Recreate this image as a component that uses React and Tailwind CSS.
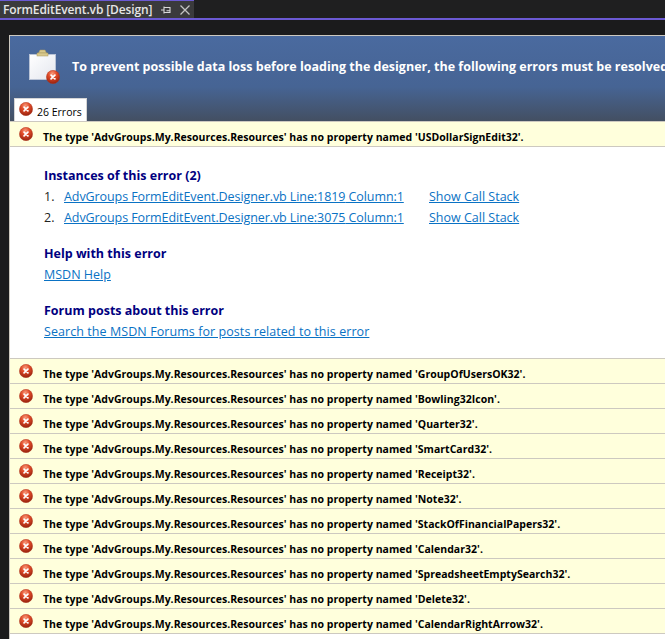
import React from 'react';

const ErrorIcon = ({ className }) => (
    <svg viewBox="0 0 16 16" className={className}>
        <defs>
            <radialGradient id="errFill" cx="45%" cy="25%" r="80%">
                <stop offset="0%" stopColor="#f79a7c" />
                <stop offset="40%" stopColor="#e04a28" />
                <stop offset="100%" stopColor="#8f1d0c" />
            </radialGradient>
        </defs>
        <circle cx="8" cy="8" r="7.6" fill="url(#errFill)" stroke="#b03a20" strokeWidth="0.5" />
        <path d="M5.8 5.8 L10.2 10.2 M10.2 5.8 L5.8 10.2" stroke="#fff" strokeWidth="2" strokeLinecap="round" />
    </svg>
);

const ClipboardIcon = () => (
    <div className="relative w-[32px] h-[36px] shrink-0">
        <svg viewBox="0 0 32 36" className="w-[32px] h-[36px]">
            <defs>
                <linearGradient id="paper" x1="0" y1="0" x2="1" y2="1">
                    <stop offset="0%" stopColor="#ffffff" />
                    <stop offset="100%" stopColor="#e3e6ee" />
                </linearGradient>
            </defs>
            <rect x="0.5" y="6.5" width="26" height="25" fill="url(#paper)" stroke="#b9c3d6" />
            <path d="M9.5 5 L11 2 H16 L17.5 5 Z" fill="#d9c98c" stroke="#a8975c" strokeWidth="0.5" />
            <rect x="8" y="5" width="11" height="3" fill="#d9c98c" stroke="#a8975c" strokeWidth="0.5" />
        </svg>
        <ErrorIcon className="absolute left-[17px] top-[22px] w-[14px] h-[14px]" />
    </div>
);

const errors = [
    'GroupOfUsersOK32',
    'Bowling32Icon',
    'Quarter32',
    'SmartCard32',
    'Receipt32',
    'Note32',
    'StackOfFinancialPapers32',
    'Calendar32',
    'SpreadsheetEmptySearch32',
    'Delete32',
    'CalendarRightArrow32',
];

const ErrorRow = ({ name, className }) => (
    <div className={`flex items-start h-[25px] bg-[#ffffdc] border-b border-[#cdc9c0] pl-[9px] ${className || ''}`}>
        <ErrorIcon className="w-[14px] h-[14px] mt-[5px] shrink-0" />
        <span className="ml-[10px] mt-[8px] text-[10.5px] leading-[15px] font-bold text-black whitespace-nowrap tracking-[0.02px]">
            The type 'AdvGroups.My.Resources.Resources' has no property named '{name}'.
        </span>
    </div>
);

const Instance = ({ n, line }) => (
    <div className="flex items-center h-[21px] text-[12.5px] whitespace-nowrap">
        <span className="w-[20px] text-[#222]">{n}.</span>
        <a className="w-[365px] text-[#0a72c4] underline tracking-[-0.08px]">AdvGroups FormEditEvent.Designer.vb Line:{line} Column:1</a>
        <a className="text-[#0a72c4] underline">Show Call Stack</a>
    </div>
);

export default function App() {
    return (
        <div className="w-[665px] h-[639px] overflow-hidden bg-[#1b1b1c] font-['Open_Sans','Noto_Sans',sans-serif]">
            {/* Tab strip */}
            <div className="h-[20px] bg-[#1f1f20] border-b-2 border-[#6b59d3] flex">
                <div className="w-[194px] h-[18px] bg-[#3a3a3c] border-t border-[#6b59d3] flex items-center pl-[3px] text-[12px] font-semibold text-[#e6e6e6] whitespace-nowrap">
                    <span className="w-[158px] tracking-[-0.12px]">FormEditEvent.vb [Design]</span>
                    <svg viewBox="0 0 10 10" className="w-[10px] h-[10px]" fill="none" stroke="#d8d8d8" strokeWidth="1.1">
                        <path d="M0 5 H3 M3 1.5 V8.5 M3 2.5 H9 V7.5 H3 M5.5 5.8 H9" />
                    </svg>
                    <svg viewBox="0 0 10 10" className="w-[10px] h-[10px] ml-[9px]" fill="none" stroke="#c4c4c4" strokeWidth="1.3">
                        <path d="M0.5 0.5 L9.5 9.5 M9.5 0.5 L0.5 9.5" />
                    </svg>
                </div>
            </div>

            {/* Designer error panel */}
            <div className="ml-[9px] mt-[15px] w-[656px] h-[604px] overflow-hidden border-l border-t border-[#cdc9c0] bg-white">
                <div className="h-[85px] relative bg-gradient-to-b from-[#4a6a9f] via-[#466494] via-60% to-[#434f62]">
                    <div className="flex items-center pl-[19px] pt-[12px] whitespace-nowrap">
                        <ClipboardIcon />
                        <span className="ml-[11px] mt-[2px] text-[12.5px] font-bold text-white">
                            To prevent possible data loss before loading the designer, the following errors must be resolved:
                        </span>
                    </div>
                    <div className="absolute left-[4px] bottom-0 w-[73px] h-[23px] bg-white border border-b-0 border-[#d5d5d5] flex items-start pl-[4px]">
                        <ErrorIcon className="w-[14px] h-[14px] mt-[3px] shrink-0" />
                        <span className="ml-[4px] mt-[6px] text-[10.5px] leading-[15px] text-black whitespace-nowrap">26 Errors</span>
                    </div>
                </div>

                <ErrorRow name="USDollarSignEdit32" className="border-t border-t-[#cdc9c0] !h-[26px]" />

                <div className="h-[212px] pl-[34px] pt-[20px] border-b border-[#cdc9c0]">
                    <h3 className="text-[12.5px] leading-[18px] font-bold text-[#000080]">Instances of this error (2)</h3>
                    <div className="mt-[2px]">
                        <Instance n={1} line={1819} />
                        <Instance n={2} line={3075} />
                    </div>
                    <h3 className="mt-[16px] text-[12.5px] leading-[18px] font-bold text-[#000080]">Help with this error</h3>
                    <a className="block mt-[3px] text-[12.5px] leading-[18px] text-[#0a72c4] underline">MSDN Help</a>
                    <h3 className="mt-[18px] text-[12.5px] leading-[18px] font-bold text-[#000080]">Forum posts about this error</h3>
                    <a className="block mt-[3px] text-[12.5px] leading-[18px] text-[#0a72c4] underline tracking-[0.07px]">Search the MSDN Forums for posts related to this error</a>
                </div>

                {errors.map((name) => (
                    <ErrorRow key={name} name={name} />
                ))}
            </div>
        </div>
    );
}
